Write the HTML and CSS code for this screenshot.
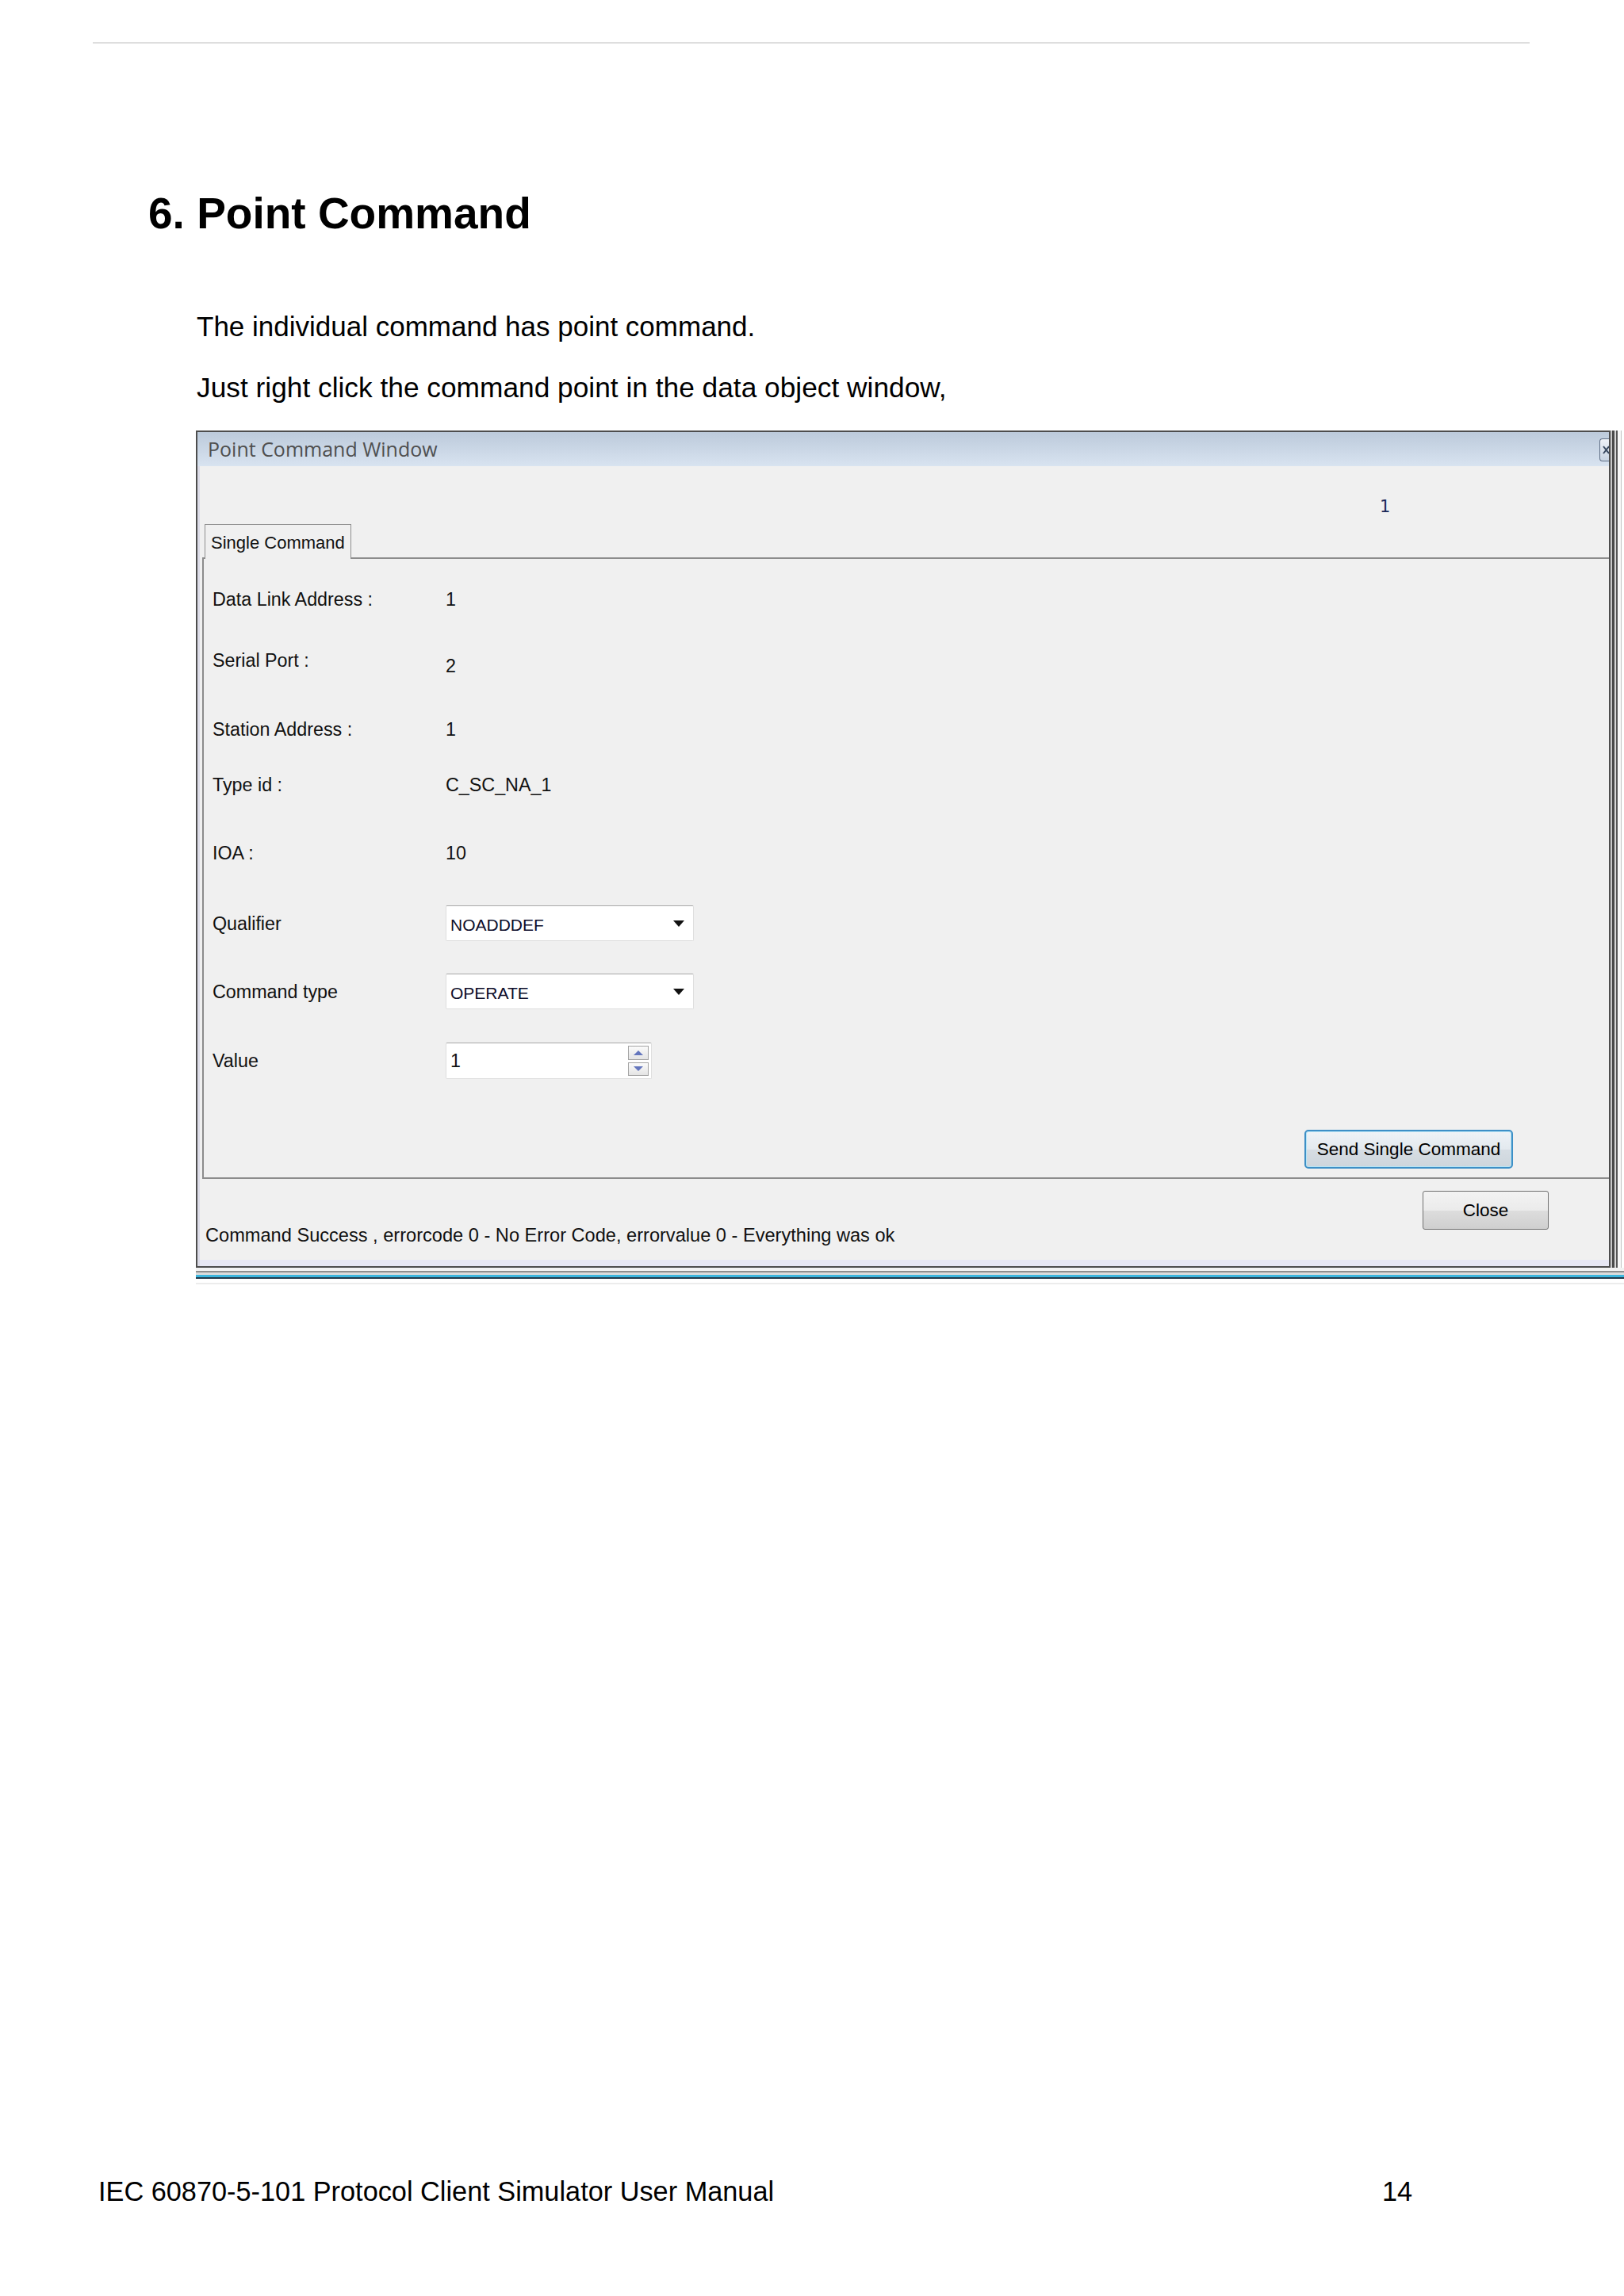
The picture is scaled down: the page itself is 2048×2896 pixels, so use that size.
FILE: index.html
```html
<!DOCTYPE html>
<html lang="en">
<head>
<meta charset="utf-8">
<title>Point Command</title>
<link rel="stylesheet" href="styles.css">
</head>
<body>
<div class="page">
  <div class="rule"></div>
  <h1 class="title">6. Point Command</h1>
  <p class="para p1">The individual command has point command.</p>
  <p class="para p2">Just right click the command point in the data object window,</p>

  <div class="shot">
    <div class="shot-row">
      <div class="window">
        <div class="titlebar">
          <span class="title-text">Point Command Window</span>
          <span class="xbtn">
            <svg width="11" height="27" viewBox="0 0 11 27"><path d="M4 9 L11 18 M11 9 L4 18" stroke="#3a4a60" stroke-width="2" fill="none"/></svg>
          </span>
        </div>
        <div class="topzone"><span class="top-one">1</span></div>
        <div class="tabstrip">
          <div class="tl-left"></div>
          <div class="tab">Single Command</div>
          <div class="tl-rest"></div>
        </div>
        <div class="panel">
          <div class="form">
            <div class="cell">Data Link Address :</div>
            <div class="cell">1</div>
            <div class="cell">Serial Port :</div>
            <div class="cell low">2</div>
            <div class="cell">Station Address :</div>
            <div class="cell">1</div>
            <div class="cell">Type id :</div>
            <div class="cell">C_SC_NA_1</div>
            <div class="cell">IOA :</div>
            <div class="cell">10</div>
            <div class="cell">Qualifier</div>
            <div class="cell">
              <div class="combo"><span class="combo-text">NOADDDEF</span>
                <svg class="arrow" width="14" height="9" viewBox="0 0 14 9"><path d="M0 0 H14 L7 8 Z" fill="#111"/></svg>
              </div>
            </div>
            <div class="cell">Command type</div>
            <div class="cell">
              <div class="combo"><span class="combo-text">OPERATE</span>
                <svg class="arrow" width="14" height="9" viewBox="0 0 14 9"><path d="M0 0 H14 L7 8 Z" fill="#111"/></svg>
              </div>
            </div>
            <div class="cell">Value</div>
            <div class="cell">
              <div class="spin"><span class="spin-text">1</span>
                <div class="spinbtns">
                  <div class="sbtn sbtn-up"><svg width="14" height="8" viewBox="0 0 14 8"><path d="M1 7 H13 L7 1 Z" fill="#6476bd"/></svg></div>
                  <div class="sbtn sbtn-down"><svg width="14" height="8" viewBox="0 0 14 8"><path d="M1 1 H13 L7 7 Z" fill="#6476bd"/></svg></div>
                </div>
              </div>
            </div>
          </div>
          <div class="send-row"><div class="btn btn-send">Send Single Command</div></div>
        </div>
        <div class="status">
          <div class="status-text">Command Success , errorcode 0 - No Error Code, errorvalue 0 - Everything was ok</div>
          <div class="btn btn-close">Close</div>
        </div>
      </div>
      <div class="rframe"></div>
    </div>
    <div class="bframe"></div>
  </div>

  <div class="footer">
    <span>IEC 60870-5-101 Protocol Client Simulator User Manual</span>
    <span>14</span>
  </div>
</div>
</body>
</html>
```
FILE: styles.css
```css
* { box-sizing: border-box; }
html, body { margin: 0; padding: 0; background: #fff; }
body {
  width: 2048px;
  font-family: "Liberation Sans", Arial, sans-serif;
  color: #000;
}
.page { height: 2896px; overflow: hidden; }

.rule {
  margin: 53px 0 0 117px;
  width: 1812px;
  border-top: 2px solid #dedede;
}
.title {
  margin: 187px 0 0 187px;
  font-size: 55px;
  line-height: 54px;
  font-weight: 700;
}
.para {
  margin: 0 0 0 248px;
  font-size: 35px;
  line-height: 35px;
}
.p1 { margin-top: 98px; }
.p2 { margin-top: 42px; font-size: 35.3px; }

/* screenshot */
.shot {
  margin: 37px 0 0 247px;
  width: 1801px;
  overflow: hidden;
}
.shot-row { display: flex; }
.window {
  flex: none;
  width: 1784px;
  border: 2px solid #4d4d4d;
  background: #f0f0f0;
  font-size: 23.3px;
  color: #111;
  box-shadow: inset 3px 0 0 #dcdce8, inset 0 -8px 0 #e7e7f3;
}
.titlebar {
  height: 43px;
  display: flex;
  align-items: flex-start;
  background: linear-gradient(#bccadb, #d8e3f0);
}
.title-text {
  padding-left: 13px;
  font-family: "Open Sans", "Liberation Sans", sans-serif;
  font-size: 25px;
  line-height: 43px;
  color: #4f4f4f;
}
.xbtn {
  margin-left: auto;
  margin-top: 8px;
  width: 12px;
  height: 29px;
  border: 1px solid #5f6f86;
  border-right: none;
  border-radius: 4px 0 0 4px;
  background: linear-gradient(#eef2f7, #c8d4e2);
  overflow: hidden;
  display: flex;
}
.topzone {
  height: 73px;
  padding: 36px 0 0 1491px;
  line-height: 28px;
}
.top-one {
  font-family: "DejaVu Sans", sans-serif;
  font-size: 21px;
  color: #1b2858;
}
.tabstrip {
  display: flex;
  height: 44px;
  margin-left: 6px;
}
.tl-left { width: 3px; border-bottom: 2px solid #8c8c8c; }
.tl-rest { flex: 1; border-bottom: 2px solid #8c8c8c; }
.tab {
  width: 185px;
  border: 1px solid #8e8e8e;
  border-bottom: none;
  padding: 10px 0 0 7px;
  font-size: 22px;
  line-height: 26px;
  background: #f0f0f0;
}
.panel {
  margin-left: 6px;
  border-left: 2px solid #8c8c8c;
  border-bottom: 2px solid #8c8c8c;
  padding: 28px 0 11px 11px;
}
.form {
  display: grid;
  grid-template-columns: 294px 1fr;
  grid-template-rows: 77px 87px 70px 86px 89px 86px 87px 45px;
}
.cell {
  height: 45px;
  display: flex;
  align-items: center;
  line-height: 28px;
}
.low { padding-top: 14px; }
.combo {
  width: 313px;
  height: 45px;
  background: #fff;
  border: 1px solid #dedede;
  border-top-color: #a8a8a8;
  border-radius: 2px;
  display: flex;
  align-items: center;
  justify-content: space-between;
  padding: 4px 11px 0 5px;
  font-size: 21px;
  color: #0d0d2a;
}
.arrow { margin-top: -3px; }
.spin {
  width: 260px;
  height: 46px;
  background: #fff;
  border: 1px solid #dedede;
  border-top-color: #a8a8a8;
  border-radius: 2px;
  display: flex;
  align-items: center;
  justify-content: space-between;
  padding: 0 3px 0 5px;
}
.spinbtns {
  display: flex;
  flex-direction: column;
  gap: 3px;
  width: 26px;
}
.sbtn {
  height: 18px;
  border: 1px solid #a3a3a3;
  background: linear-gradient(#fbfbfb, #e4e4e4);
  display: flex;
  align-items: center;
  justify-content: center;
}
.sbtn-down { height: 17px; }
.send-row {
  margin-top: 65px;
  display: flex;
  justify-content: flex-end;
  padding-right: 121px;
}
.btn {
  display: flex;
  align-items: center;
  justify-content: center;
  height: 49px;
  font-size: 22.5px;
  color: #000;
}
.btn-send {
  width: 263px;
  border: 2px solid #3d8fc6;
  border-radius: 5px;
  background: linear-gradient(#eef3f7, #e3e9ee 50%, #d6dde3 51%, #cdd5dc);
  box-shadow: inset 0 0 0 1px #b5e4f6;
}
.btn-close {
  width: 159px;
  border: 1px solid #707070;
  border-radius: 3px;
  background: linear-gradient(#f3f3f3, #ebebeb 50%, #dddddd 51%, #cfcfcf);
  align-self: start;
}
.status {
  display: grid;
  grid-template-columns: 1fr auto;
  grid-template-rows: 70px;
  padding: 15px 76px 25px 10px;
}
.status-text {
  align-self: end;
  line-height: 28px;
  font-size: 23.6px;
}
.rframe {
  flex: none;
  width: 17px;
  background: linear-gradient(to right,
    #c8c8c8 0 2px, #4a4a4a 2px 5px, #d8d8d8 5px 7px, #555 7px 9px,
    #f7f7f7 9px 13px, #c4c4c4 13px 14px, #fff 14px);
}
.bframe {
  height: 22px;
  background: linear-gradient(to bottom,
    #f2f2f2 0 4px, #8e8e8e 4px 6px, #dcdcdc 6px 9px, #3cb6de 9px 12px,
    #22394a 12px 14px, #fff 14px 19px, #ececec 19px 21px, #fff 21px);
}

.footer {
  margin-top: 1126px;
  display: grid;
  grid-template-columns: 1619px auto;
  padding-left: 124px;
  font-size: 34.3px;
  line-height: 35px;
}
```
